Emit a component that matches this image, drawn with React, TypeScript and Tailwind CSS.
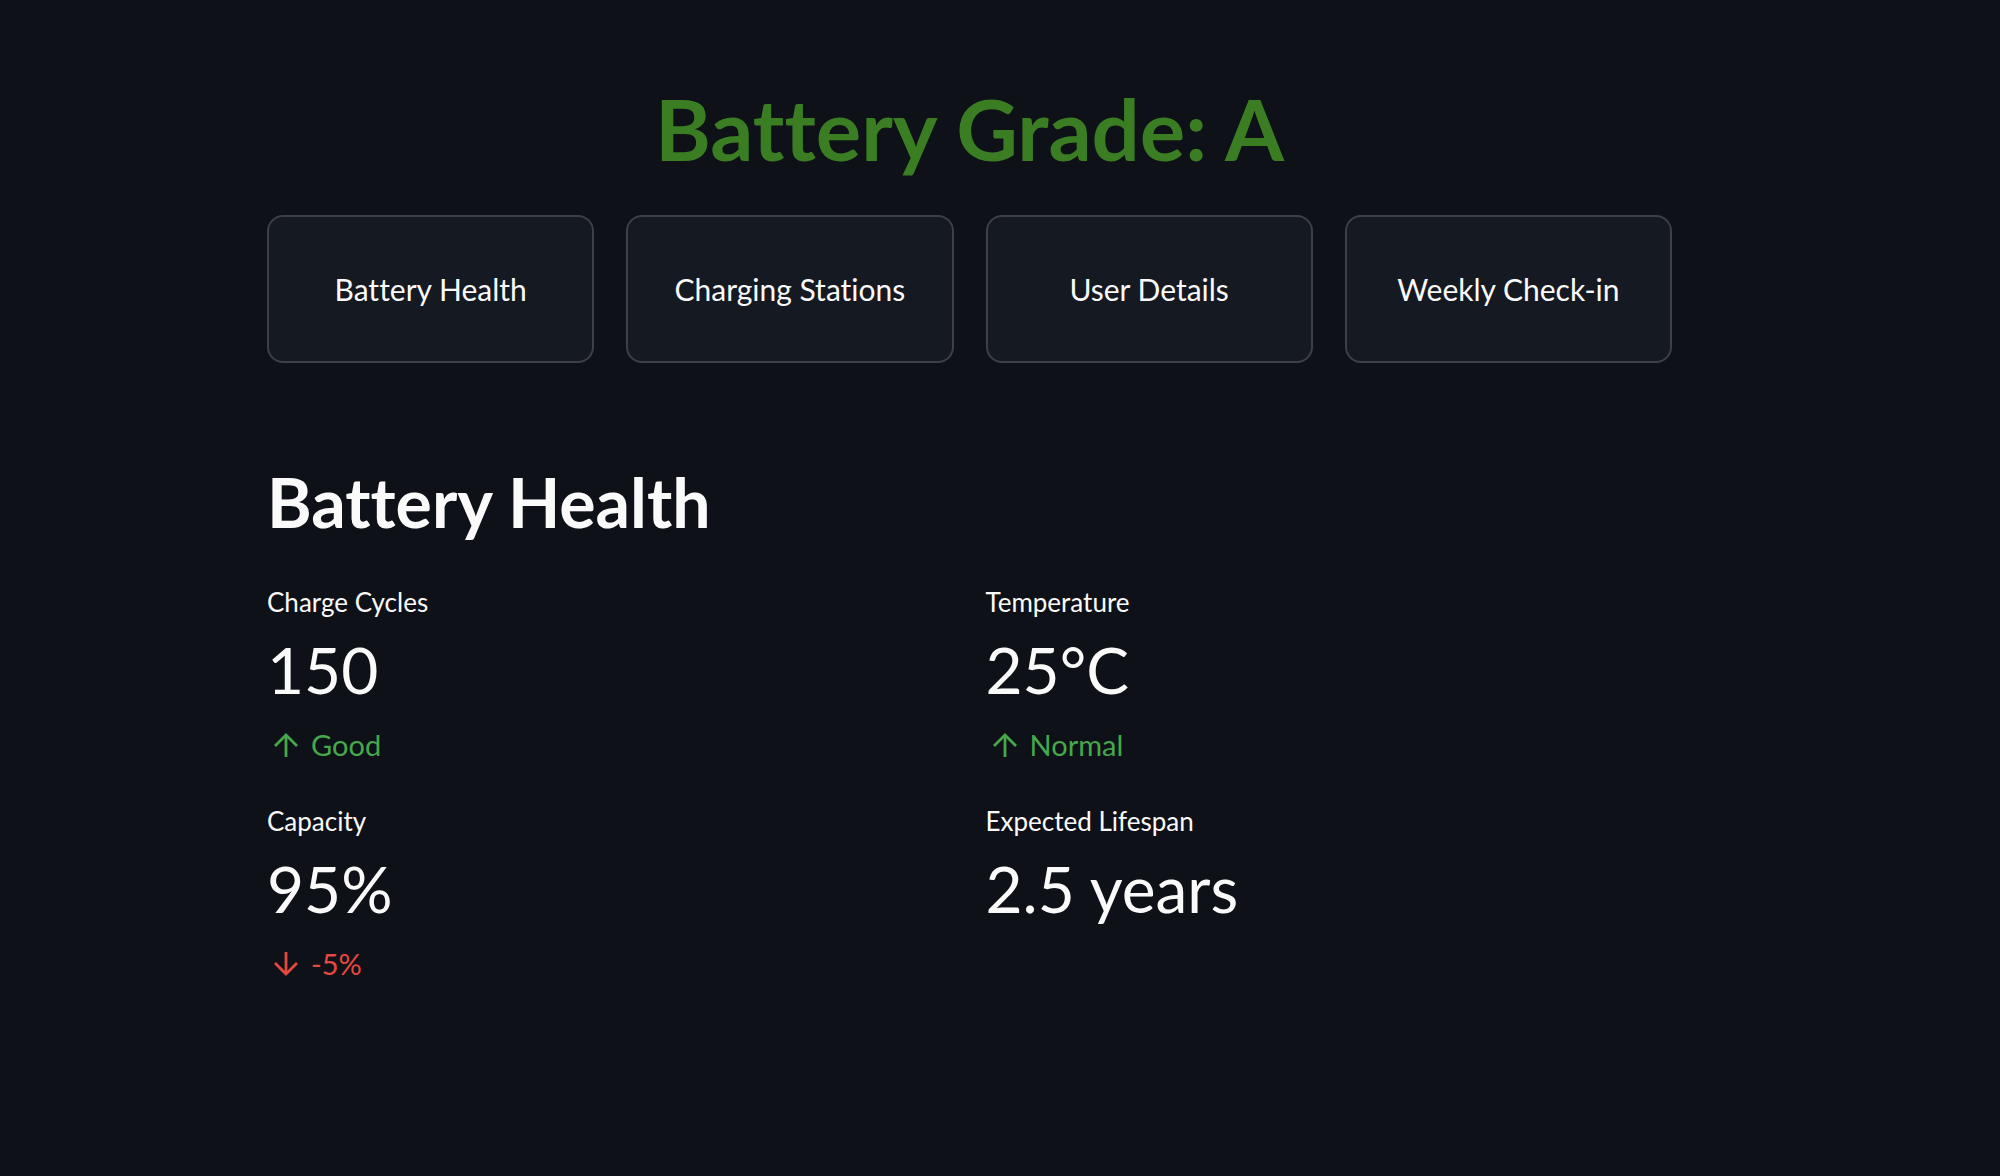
import React from "react";

type Delta = { text: string; dir: "up" | "down" };
type Metric = { label: string; value: string; delta?: Delta };

const tabs = ["Battery Health", "Charging Stations", "User Details", "Weekly Check-in"];

const metrics: Metric[] = [
  { label: "Charge Cycles", value: "150", delta: { text: "Good", dir: "up" } },
  { label: "Temperature", value: "25°C", delta: { text: "Normal", dir: "up" } },
  { label: "Capacity", value: "95%", delta: { text: "-5%", dir: "down" } },
  { label: "Expected Lifespan", value: "2.5 years" },
];

function Arrow({ dir }: { dir: "up" | "down" }) {
  return (
    <svg width="26" height="26" viewBox="0 0 26 26" fill="none" stroke="currentColor" strokeWidth="2.8" strokeLinecap="butt" strokeLinejoin="miter">
      {dir === "up" ? (
        <>
          <path d="M13 3 V25" />
          <path d="M2 14 L13 3 L24 14" />
        </>
      ) : (
        <>
          <path d="M13 1 V23" />
          <path d="M2 12 L13 23 L24 12" />
        </>
      )}
    </svg>
  );
}

function MetricCell({ m }: { m: Metric }) {
  return (
    <div className="flex flex-col">
      <div className="text-[26px] leading-[31px] text-[#fafafa]">{m.label}</div>
      <div className="mt-[13px] text-[64px] leading-[78px] text-[#fafafa]">{m.value}</div>
      {m.delta && (
        <div
          className={
            m.delta.dir === "up"
              ? "mt-[18px] flex items-center gap-[12px] pl-[6px] text-[29px] leading-[35px] text-[#46a84a]"
              : "mt-[18px] flex items-center gap-[12px] pl-[6px] text-[29px] leading-[35px] text-[#e5483f]"
          }
        >
          <Arrow dir={m.delta.dir} />
          <span>{m.delta.text}</span>
        </div>
      )}
    </div>
  );
}

export default function App() {
  return (
    <div className="min-h-[1176px] w-full bg-[#0e1117] font-['Lato',sans-serif] text-[#fafafa] [font-variant-ligatures:none]">
      <div className="pl-[267px] pt-[80px]">
        <div className="w-[1405px]">
          <h1 className="text-center text-[85px] font-bold leading-[96px] text-[#3a7d23]">Battery Grade: A</h1>

          <div className="mt-[39px] grid grid-cols-4 gap-[32px]">
            {tabs.map((t) => (
              <button
                key={t}
                className="flex h-[148px] items-center justify-center rounded-[16px] border-2 border-[#3d4046] bg-[#151922] text-[30px] text-[#fafafa]"
              >
                {t}
              </button>
            ))}
          </div>

          <h2 className="mt-[100px] text-[68px] font-bold leading-[78px] text-[#fafafa]">Battery Health</h2>

          <div className="mt-[46px] grid grid-cols-2 gap-x-[32px] gap-y-[44px]">
            {metrics.map((m) => (
              <MetricCell key={m.label} m={m} />
            ))}
          </div>
        </div>
      </div>
    </div>
  );
}
